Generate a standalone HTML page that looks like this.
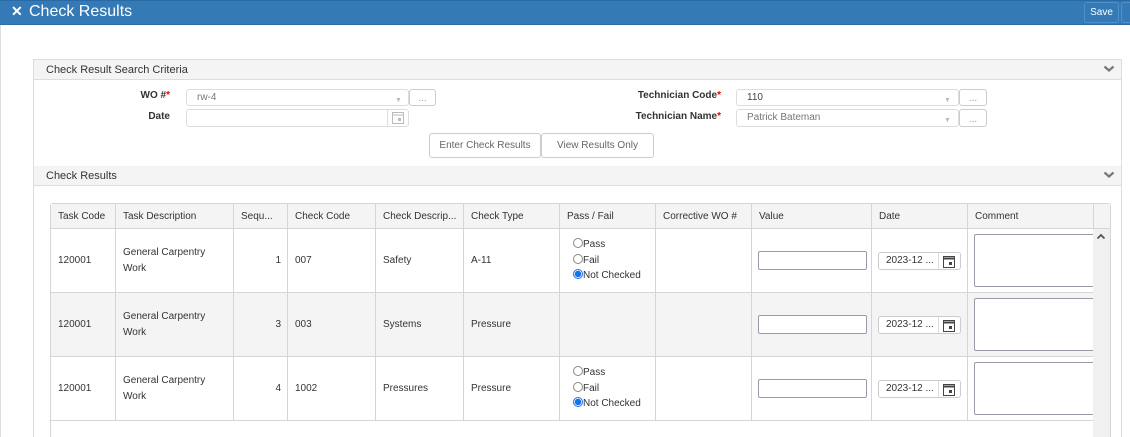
<!DOCTYPE html>
<html><head><style>
*{box-sizing:border-box;margin:0;padding:0}
body{width:1130px;height:437px;overflow:hidden;background:#fff;font-family:"Liberation Sans",Arial,sans-serif;color:#333;position:relative}
.a{position:absolute}
.hdr{left:0;top:0;width:1130px;height:25px;background:#337ab7;border-top:1px solid #2a6aa3;border-bottom:1px solid #2d6da6}
.ph{background:#f4f4f4;font-size:11px;color:#333;padding-left:12px;line-height:21px}
.lbl{font-size:10px;font-weight:bold;color:#333;text-align:right}
.req{color:#e00}
.inp{border:1px solid #ddd;border-radius:3px;background:#fff;font-size:10px;color:#777;padding-left:10px;line-height:16px}
.btn{border:1px solid #ccc;border-radius:3px;background:#fff;font-size:10px;color:#666;text-align:center}
.cell{position:absolute;border-right:1px solid #d5d5d5;border-bottom:1px solid #d5d5d5;font-size:10px;color:#333;padding-left:7px;display:flex;align-items:center}
.th{background:#f4f4f4}
.val{border:1px solid #9a9aaa;border-radius:2px;background:#fff;width:109px;height:19px;flex-shrink:0}
.dt{border:1px solid #ccc;border-radius:3px;width:83px;height:18px;font-size:10px;padding-left:7px;line-height:16px;color:#333;position:relative;background:#fff;flex-shrink:0}
.dt i{position:absolute;right:0;top:0;width:22px;height:16px;border-left:1px solid #ddd}
.cm{border:1px solid #9a9aaa;border-radius:2px;width:130px;height:53px;background:#fff;flex-shrink:0}
.rad{font-size:10px;line-height:15.5px;color:#333}
.r{display:inline-block;width:10px;height:10px;border:1px solid #888;border-radius:50%;vertical-align:-1px}
.r.on{border-color:#1a73e8;background:radial-gradient(circle,#1a73e8 0 3px,#fff 3.5px)}
.arr{font-size:7px;color:#bbb}
</style></head><body>
<div class="a hdr"></div>
<div class="a" style="left:11px;top:3px;color:#fff;font-size:14px;font-weight:bold">✕</div>
<div class="a" style="left:29px;top:3px;color:#fff;font-size:16px">Check Results</div>
<div class="a" style="left:1084px;top:2px;width:35px;height:21px;border:1px solid #4f90cc;border-radius:3px;color:#fff;font-size:10px;text-align:center;line-height:19px">Save</div>
<div class="a" style="left:1121px;top:2px;width:12px;height:21px;border:1px solid #4f90cc;border-radius:3px"></div>
<div class="a" style="left:0;top:25px;width:1px;height:412px;background:#ddd"></div>

<div class="a" style="left:33px;top:59px;width:1089px;height:378px;border:1px solid #ddd;border-bottom:none"></div>
<div class="a ph" style="left:34px;top:60px;width:1087px;height:20px;border-bottom:1px solid #ddd">Check Result Search Criteria</div>
<svg class="a" style="left:1103px;top:65px" width="12" height="8"><path d="M1.5 1.5 L6 5.5 L10.5 1.5" stroke="#777" stroke-width="2.2" fill="none"/></svg>

<div class="a lbl" style="left:90px;top:90px;width:80px">WO #<span class="req">*</span></div>
<div class="a inp" style="left:186px;top:89px;width:223px;height:17px">rw-4</div>
<div class="a arr" style="left:395px;top:97px">▼</div>
<div class="a btn" style="left:409px;top:89px;width:27px;height:17px;line-height:18px;color:#999">...</div>
<div class="a lbl" style="left:90px;top:111px;width:80px">Date</div>
<div class="a inp" style="left:186px;top:109px;width:223px;height:18px"></div>
<div class="a" style="left:387px;top:110px;width:1px;height:16px;background:#ddd"></div>
<svg class="a" style="left:392px;top:111px" width="12" height="13"><rect x="0.5" y="1.5" width="11" height="11" fill="none" stroke="#bbb"/><line x1="0.5" y1="4" x2="11.5" y2="4" stroke="#bbb"/><rect x="6" y="7" width="3" height="3" fill="#bbb"/></svg>

<div class="a lbl" style="left:600px;top:90px;width:121px">Technician Code<span class="req">*</span></div>
<div class="a inp" style="left:736px;top:89px;width:223px;height:17px;color:#444">110</div>
<div class="a arr" style="left:944px;top:97px">▼</div>
<div class="a btn" style="left:959px;top:89px;width:28px;height:17px;line-height:18px;color:#999">...</div>
<div class="a lbl" style="left:600px;top:111px;width:121px">Technician Name<span class="req">*</span></div>
<div class="a inp" style="left:736px;top:109px;width:223px;height:18px">Patrick Bateman</div>
<div class="a arr" style="left:944px;top:117px">▼</div>
<div class="a btn" style="left:959px;top:109px;width:28px;height:18px;line-height:19px;color:#999">...</div>

<div class="a btn" style="left:429px;top:133px;width:112px;height:25px;line-height:23px">Enter Check Results</div>
<div class="a btn" style="left:541px;top:133px;width:113px;height:25px;line-height:23px">View Results Only</div>

<div class="a ph" style="left:34px;top:166px;width:1087px;height:20px;border-bottom:1px solid #ddd">Check Results</div>
<svg class="a" style="left:1103px;top:171px" width="12" height="8"><path d="M1.5 1.5 L6 5.5 L10.5 1.5" stroke="#777" stroke-width="2.2" fill="none"/></svg>

<div class="a" style="left:50px;top:203px;width:1061px;height:234px;border:1px solid #d5d5d5;border-bottom:none;border-radius:3px 3px 0 0"></div>

<div class="a" style="left:51px;top:204px">
<div class="cell th" style="left:0;top:0;width:65px;height:25px">Task Code</div>
<div class="cell th" style="left:65px;top:0;width:118px;height:25px">Task Description</div>
<div class="cell th" style="left:183px;top:0;width:54px;height:25px">Sequ...</div>
<div class="cell th" style="left:237px;top:0;width:88px;height:25px">Check Code</div>
<div class="cell th" style="left:325px;top:0;width:88px;height:25px">Check Descrip...</div>
<div class="cell th" style="left:413px;top:0;width:96px;height:25px">Check Type</div>
<div class="cell th" style="left:509px;top:0;width:96px;height:25px">Pass / Fail</div>
<div class="cell th" style="left:605px;top:0;width:96px;height:25px">Corrective WO #</div>
<div class="cell th" style="left:701px;top:0;width:120px;height:25px">Value</div>
<div class="cell th" style="left:821px;top:0;width:96px;height:25px">Date</div>
<div class="cell th" style="left:917px;top:0;width:126px;height:25px">Comment</div>
<div class="cell th" style="left:1043px;top:0;width:16px;height:25px;border-right:none"></div>
</div>

<div class="a" id="rows" style="left:51px;top:229px"></div>
<div class="a" style="left:1093px;top:229px;width:17px;height:208px;background:#f0f0f0"></div>
<svg class="a" style="left:1096px;top:233px" width="10" height="7"><path d="M1.5 5.5 L5 2 L8.5 5.5" stroke="#555" stroke-width="1.8" fill="none"/></svg>
<script>
var rows=[["1","007","Safety","A-11",1],["3","003","Systems","Pressure",0],["4","1002","Pressures","Pressure",1]];
var h="";
rows.forEach(function(r,i){
var t=i*64,bg=i==1?"background:#f4f4f4;":"";
function c(l,w,html,ex){h+='<div class="cell" style="'+bg+'left:'+l+'px;top:'+t+'px;width:'+w+'px;height:64px;'+(ex||'')+'">'+html+'</div>';}
c(0,65,"120001");
c(65,118,'<div style="line-height:16px">General Carpentry<br>Work</div>');
c(183,54,r[0],"justify-content:flex-end;padding-right:6px");
c(237,88,r[1]);c(325,88,r[2]);c(413,96,r[3]);
c(509,96,r[4]?'<div class="rad" style="padding-left:6px"><span class="r"></span>Pass<br><span class="r"></span>Fail<br><span class="r on"></span>Not Checked</div>':'');
c(605,96,"");
c(701,120,'<div class="val"></div>',"padding-left:6px");
c(821,96,'<div class="dt">2023-12 ...<i></i><svg style="position:absolute;right:5px;top:2px" width="12" height="13"><rect x="0.5" y="1.5" width="11" height="11" fill="none" stroke="#444"/><line x1="0.5" y1="3.5" x2="11.5" y2="3.5" stroke="#444" stroke-width="2"/><rect x="6" y="7" width="3" height="3" fill="#444"/></svg></div>',"padding-left:6px");
c(917,126,'<div class="cm"></div>',"padding-left:6px;border-right:none;overflow:hidden");
});
document.getElementById("rows").innerHTML=h;
</script>
</body></html>
